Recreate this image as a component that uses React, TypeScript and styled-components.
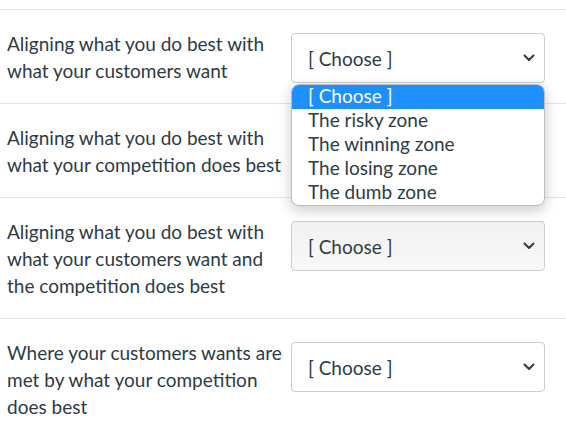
import { useState } from "react";
import styled, { createGlobalStyle } from "styled-components";

const GlobalStyle = createGlobalStyle`
  html, body {
    margin: 0;
    padding: 0;
    background: #ffffff;
  }
  body {
    font-family: Lato, "Open Sans", "Liberation Sans", sans-serif;
    color: #2d3b45;
  }
`;

const Wrapper = styled.div`
  width: 566px;
  padding-top: 9px;
`;

const Row = styled.div`
  display: flex;
  align-items: flex-start;
  gap: 4px;
  padding: 20px 21px 19px 7px;
  border-top: 1px solid #e2e4e6;
`;

const Label = styled.div`
  width: 280px;
  flex-shrink: 0;
  font-size: 19px;
  line-height: 27px;
`;

const SelectWrap = styled.div`
  position: relative;
  width: 254px;
  margin-top: 3px;
`;

const SelectBox = styled.button<{ $shaded?: boolean }>`
  display: flex;
  align-items: center;
  justify-content: space-between;
  width: 100%;
  height: 50px;
  padding: 0 9px 0 16px;
  border: 1px solid #c7cdd1;
  border-radius: 4px;
  background: ${(p) =>
    p.$shaded ? "linear-gradient(#f1f1f1, #f8f8f8)" : "#ffffff"};
  font-family: inherit;
  font-size: 19px;
  color: #2d3b45;
  text-align: left;
  cursor: pointer;
`;

const Menu = styled.ul`
  position: absolute;
  top: 51px;
  left: 0;
  width: 252px;
  margin: 0;
  padding: 0;
  list-style: none;
  background: #ffffff;
  border: 1px solid #b9bec2;
  border-radius: 8px;
  box-shadow: 0 4px 14px rgba(0, 0, 0, 0.22);
  overflow: hidden;
  z-index: 10;
`;

const Option = styled.li<{ $active?: boolean }>`
  height: 24px;
  line-height: 22px;
  padding-left: 16px;
  font-size: 19px;
  color: ${(p) => (p.$active ? "#ffffff" : "#2d3b45")};
  background: ${(p) => (p.$active ? "#1e8fff" : "transparent")};
`;

const Chevron = () => (
  <svg width="12" height="8" viewBox="0 0 12 8" fill="none">
    <path
      d="M1.5 1.5 L6 6 L10.5 1.5"
      stroke="#2d3b45"
      strokeWidth="2"
      strokeLinecap="round"
      strokeLinejoin="round"
    />
  </svg>
);

const options = [
  "[ Choose ]",
  "The risky zone",
  "The winning zone",
  "The losing zone",
  "The dumb zone",
];

const questions = [
  "Aligning what you do best with what your customers want",
  "Aligning what you do best with what your competition does best",
  "Aligning what you do best with what your customers want and the competition does best",
  "Where your customers wants are met by what your competition does best",
];

function Dropdown({ open, shaded }: { open?: boolean; shaded?: boolean }) {
  const [isOpen, setOpen] = useState(!!open);
  return (
    <SelectWrap>
      <SelectBox $shaded={shaded} onClick={() => setOpen(!isOpen)}>
        <span>[ Choose ]</span>
        <Chevron />
      </SelectBox>
      {isOpen && (
        <Menu>
          {options.map((o, i) => (
            <Option key={o} $active={i === 0}>
              {o}
            </Option>
          ))}
        </Menu>
      )}
    </SelectWrap>
  );
}

export default function App() {
  return (
    <Wrapper>
      <GlobalStyle />
      {questions.map((q, i) => (
        <Row key={q}>
          <Label>{q}</Label>
          <Dropdown open={i === 0} shaded={i === 2} />
        </Row>
      ))}
    </Wrapper>
  );
}
